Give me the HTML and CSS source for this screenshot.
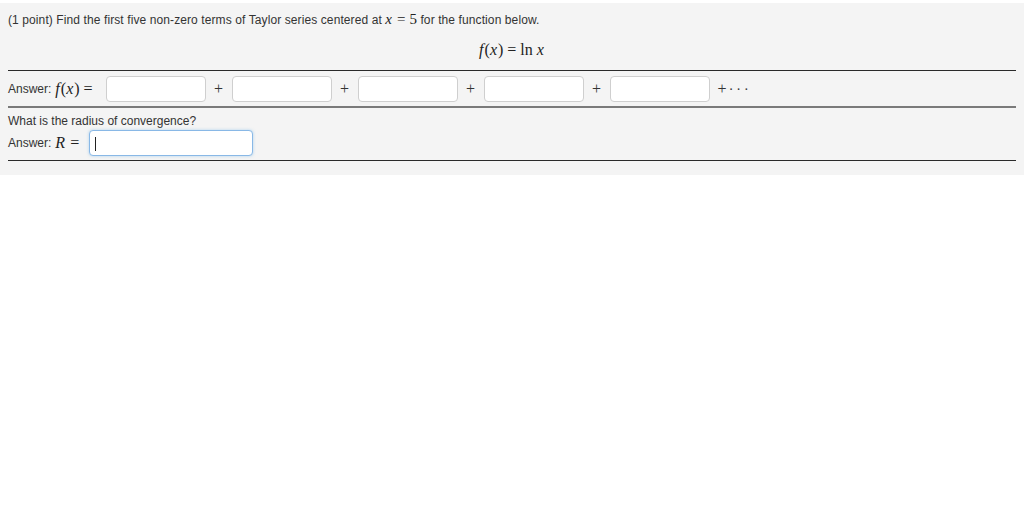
FILE: index.html
```html
<!DOCTYPE html>
<html>
<head>
<meta charset="utf-8">
<link rel="stylesheet" href="styles.css">
</head>
<body>
<div class="panel">
  <p class="intro">(1 point) Find the first five non-zero terms of Taylor series centered at <span class="math"><i>x</i><span class="rel">=</span>5</span> for the function below.</p>
  <div class="display"><span class="math big"><i class="f">f</i>(<i>x</i>)<span class="rel">=</span>ln <i>x</i></span></div>
  <div class="rule dark"></div>
  <div class="answer-row">
    <span class="label">Answer:</span>
    <span class="math big eq"><i class="f">f</i>(<i>x</i>)<span class="rel">=</span></span>
    <span class="box"></span><span class="plus">+</span>
    <span class="box"></span><span class="plus">+</span>
    <span class="box"></span><span class="plus">+</span>
    <span class="box"></span><span class="plus">+</span>
    <span class="box"></span><span class="plus tail">+<span class="dots">···</span></span>
  </div>
  <div class="rule gray"></div>
  <p class="question">What is the radius of convergence?</p>
  <div class="answer-row r-row">
    <span class="label">Answer:</span>
    <span class="math big eq eq-r"><i class="R">R</i><span class="rel">=</span></span>
    <span class="box focus"><span class="caret"></span></span>
  </div>
  <div class="rule dark last"></div>
</div>
</body>
</html>
```
FILE: styles.css
```css
html, body {
  margin: 0;
  padding: 0;
  background: #ffffff;
}
body {
  padding-top: 3px;
  font-family: "Liberation Sans", Arial, sans-serif;
  font-size: 12px;
  color: #333333;
}
.panel {
  background: #f4f4f4;
  padding: 8px 8px 14px 8px;
}
.intro {
  margin: 0;
  line-height: 16px;
  letter-spacing: 0.1px;
}
.math {
  font-family: "Liberation Serif", "Times New Roman", serif;
  font-size: 15px;
  color: #222;
  letter-spacing: 0;
}
.math i {
  font-style: italic;
  padding-right: 1px;
}
.rel {
  margin: 0 4px;
}
.math.big {
  font-size: 16px;
}
.display {
  text-align: center;
  margin-top: 11px;
  height: 22px;
  line-height: 22px;
}
.rule {
  height: 0;
}
.rule.dark {
  border-top: 1px solid #2a2a2a;
  margin-top: 9px;
}
.rule.gray {
  border-top: 2px solid #7a7a7a;
}
.answer-row {
  display: flex;
  align-items: center;
  height: 35px;
}
.label {
  margin-right: 4px;
}
.eq {
  margin-right: 8px;
}
.eq .rel {
  margin-right: 5px;
}
.eq-r {
  margin-right: 5px;
}
.box {
  display: inline-block;
  width: 98px;
  height: 24px;
  background: #ffffff;
  border: 1px solid #cfcfcf;
  border-radius: 4px;
  position: relative;
}
.plus {
  font-family: "Liberation Serif", serif;
  font-size: 16px;
  color: #333;
  width: 26px;
  text-align: center;
}
.plus.tail {
  width: auto;
  margin-left: 8px;
}
.dots {
  font-size: 14px;
  letter-spacing: 3px;
  margin-left: 2px;
}
.question {
  margin: 6px 0 0 0;
  line-height: 14px;
}
.r-row {
  height: 30px;
}
.box.focus {
  width: 162px;
  border-color: #89b8e6;
  box-shadow: 0 0 3px rgba(102, 175, 233, 0.5);
}
.caret {
  position: absolute;
  left: 5px;
  top: 6px;
  width: 1px;
  height: 14px;
  background: #222;
}
.rule.last {
  margin-top: 2px;
}
```
